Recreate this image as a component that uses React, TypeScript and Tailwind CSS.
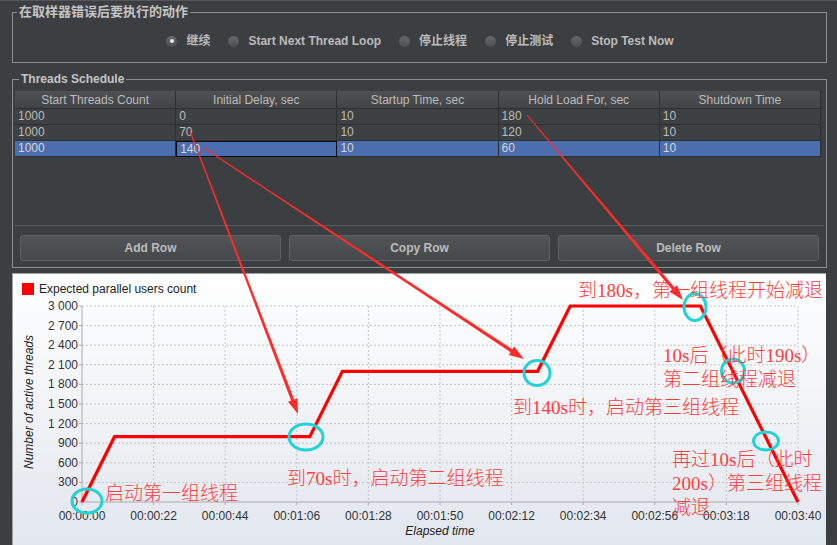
import React from 'react'

const COLS = ['Start Threads Count', 'Initial Delay, sec', 'Startup Time, sec', 'Hold Load For, sec', 'Shutdown Time']
const ROWS = [
  ['1000', '0', '10', '180', '10'],
  ['1000', '70', '10', '120', '10'],
  ['1000', '140', '10', '60', '10'],
]
const RADIOS = [
  { label: '继续', on: true },
  { label: 'Start Next Thread Loop', on: false },
  { label: '停止线程', on: false },
  { label: '停止测试', on: false },
  { label: 'Stop Test Now', on: false },
]

const xs = (t: number) => 81 + (t * 716) / 220
const ys = (v: number) => 501 - (v * 196) / 3000

const LOAD = [
  [0, 0], [10, 1000], [70, 1000], [80, 2000], [140, 2000], [150, 3000], [190, 3000], [220, 0],
]
const YTICKS = ['0', '300', '600', '900', '1 200', '1 500', '1 800', '2 100', '2 400', '2 700', '3 000']

function timeLabel(s: number) {
  const m = Math.floor(s / 60)
  const r = s % 60
  return `00:${String(m).padStart(2, '0')}:${String(r).padStart(2, '0')}`
}

function arrowPoints(x0: number, y0: number, x1: number, y1: number) {
  const dx = x1 - x0
  const dy = y1 - y0
  const len = Math.hypot(dx, dy)
  const ux = dx / len
  const uy = dy / len
  const nx = -uy
  const ny = ux
  const hl = 15
  const hw = 5
  const w0 = 0.5
  const w1 = 1.7
  const bx = x1 - ux * hl
  const by = y1 - uy * hl
  const pts = [
    [x0 + nx * w0, y0 + ny * w0],
    [bx + nx * w1, by + ny * w1],
    [bx + nx * hw, by + ny * hw],
    [x1, y1],
    [bx - nx * hw, by - ny * hw],
    [bx - nx * w1, by - ny * w1],
    [x0 - nx * w0, y0 - ny * w0],
  ]
  return pts.map((p) => p.map((n) => n.toFixed(1)).join(',')).join(' ')
}

function Radio({ label, on }: { label: string; on: boolean }) {
  return (
    <div className="flex items-center gap-[8px]">
      <span className="flex h-[13px] w-[13px] items-center justify-center rounded-full border border-[#3b3d3f] bg-linear-to-b from-[#66696c] to-[#4d5052]">
        {on && <span className="h-[4px] w-[4px] rounded-full bg-[#e8e8e8]" />}
      </span>
      <span className="text-[12px] font-bold leading-4 text-[#bbbbbb]">{label}</span>
    </div>
  )
}

function Chart() {
  return (
    <svg width={814} height={272} viewBox="12 273 814 272" className="block" fontFamily="'Liberation Sans', Arial, sans-serif">
      <rect x={21} y={282} width={12} height={12} fill="#ff0000" />
      <text x={38} y={292} fontSize={12} fill="#222">Expected parallel users count</text>

      {YTICKS.map((_, i) =>
        i === 0 ? null : (
          <line key={'h' + i} x1={81} x2={797} y1={ys(i * 300)} y2={ys(i * 300)} stroke="#c4c6c9" strokeDasharray="2 2" />
        ),
      )}
      {Array.from({ length: 11 }).map((_, i) =>
        i === 0 ? null : (
          <line key={'v' + i} x1={81 + i * 71.6} x2={81 + i * 71.6} y1={305} y2={501} stroke="#c4c6c9" strokeDasharray="2 2" />
        ),
      )}
      <line x1={81} x2={81} y1={305} y2={502} stroke="#a8abaf" />
      <line x1={80} x2={797} y1={501} y2={501} stroke="#a8abaf" />
      {YTICKS.map((t, i) => (
        <g key={'y' + i}>
          <line x1={78} x2={81} y1={ys(i * 300)} y2={ys(i * 300)} stroke="#a8abaf" />
          <text x={77} y={ys(i * 300) + 4} fontSize={12} fill="#333" textAnchor="end">{t}</text>
        </g>
      ))}
      {Array.from({ length: 11 }).map((_, i) => (
        <g key={'x' + i}>
          <line x1={81 + i * 71.6} x2={81 + i * 71.6} y1={501} y2={504} stroke="#a8abaf" />
          <text x={81 + i * 71.6} y={519} fontSize={12} fill="#333" textAnchor="middle">{timeLabel(i * 22)}</text>
        </g>
      ))}
      <text x={439} y={534} fontSize={12} fontStyle="italic" fill="#222" textAnchor="middle">Elapsed time</text>
      <text x={0} y={0} fontSize={12} fontStyle="italic" fill="#222" textAnchor="middle" transform="translate(32 401) rotate(-90)">
        Number of active threads
      </text>

      <polyline
        points={LOAD.map(([t, v]) => `${xs(t).toFixed(1)},${ys(v).toFixed(1)}`).join(' ')}
        fill="none"
        stroke="#ff0000"
        strokeWidth={3.2}
        strokeLinejoin="miter"
      />
    </svg>
  )
}

const NOTES = [
  { x: 105, y: 481, lines: ['启动第一组线程'] },
  { x: 287, y: 466, lines: ['到70s时，启动第二组线程'] },
  { x: 513, y: 395, lines: ['到140s时，启动第三组线程'] },
  { x: 578, y: 278, lines: ['到180s，第一组线程开始减退'] },
  { x: 663, y: 343, lines: ['10s后（此时190s）', '第二组线程减退'] },
  { x: 672, y: 447, lines: ['再过10s后（此时', '200s）第三组线程', '减退'] },
]

const RINGS = [
  [87, 500, 15, 12],
  [306, 436, 17, 13],
  [537, 372, 13, 12.5],
  [695, 306, 11, 13.5],
  [733, 370, 11.5, 12],
  [766, 440, 12.5, 9],
]

export default function App() {
  return (
    <div className="relative h-[545px] w-[837px] overflow-hidden border-t border-[#55585b] bg-[#3c3f41] font-['Liberation_Sans','Noto_Sans_CJK_SC',sans-serif]">
      <div className="px-[12px] pt-[3px]">
        <fieldset className="flex h-[59px] w-[815px] items-center justify-center gap-[17px] border border-[#8d9093]">
          <legend className="ml-[4px] px-[2px] text-[13px] font-bold leading-4 text-[#c4c4c4]">在取样器错误后要执行的动作</legend>
          {RADIOS.map((r) => (
            <Radio key={r.label} label={r.label} on={r.on} />
          ))}
        </fieldset>

        <fieldset className="mt-[8px] h-[197px] w-[815px] border border-[#8d9093] px-[2px] pt-[4px]">
          <legend className="ml-[4px] px-[2px] text-[12px] font-bold leading-4 text-[#c4c4c4]">Threads Schedule</legend>
          <div className="h-[135px] border-b border-[#5b5e61]">
            <div className="grid w-[806px] grid-cols-5">
              {COLS.map((c) => (
                <div
                  key={c}
                  className="h-[18px] border-r border-b border-[#2c2e30] bg-linear-to-b from-[#4f5254] to-[#414446] text-center text-[12px] leading-[18px] text-[#bbbbbb]"
                >
                  {c}
                </div>
              ))}
              {ROWS.map((row, ri) =>
                row.map((cell, ci) => {
                  const sel = ri === 2
                  const focus = sel && ci === 1
                  return (
                    <div
                      key={ri + '-' + ci}
                      className={
                        'h-[16px] pl-[3px] text-[12px] leading-[15px] ' +
                        (sel ? 'bg-[#4b6eaf] text-[#d6d6d6] ' : 'bg-[#3e4143] text-[#bbbbbb] ') +
                        (focus ? 'border border-[#0c0c0c]' : 'border-r border-b border-[#2c2e30]')
                      }
                    >
                      {cell}
                    </div>
                  )
                }),
              )}
            </div>
          </div>
          <div className="mt-[9px] grid grid-cols-3 gap-[8px] px-[5px]">
            {['Add Row', 'Copy Row', 'Delete Row'].map((b) => (
              <button
                key={b}
                className="h-[26px] rounded-[3px] border border-[#5e6265] bg-linear-to-b from-[#515557] to-[#46494b] text-[12px] font-bold text-[#bbbbbb]"
              >
                {b}
              </button>
            ))}
          </div>
        </fieldset>

        <div className="mt-[5px] h-[272px] w-[814px] border-t border-l border-[#9da0a3] bg-linear-to-b from-white to-[#e2e7ee]">
          <Chart />
        </div>
      </div>

      <svg className="pointer-events-none absolute inset-0" width={837} height={545} viewBox="0 0 837 545">
        {RINGS.map(([cx, cy, rx, ry], i) => (
          <ellipse key={i} cx={cx} cy={cy} rx={rx} ry={ry} fill="none" stroke="#22d3d6" strokeWidth={3} />
        ))}
        <polygon points={arrowPoints(190, 130, 298, 413)} fill="#ff2b2b" />
        <polygon points={arrowPoints(204, 147, 524, 358)} fill="#ff2b2b" />
        <polygon points={arrowPoints(527, 114, 683, 299)} fill="#ff2b2b" />
      </svg>

      {NOTES.map((n, i) => (
        <div
          key={i}
          className="pointer-events-none absolute whitespace-nowrap font-['Liberation_Serif','Noto_Sans_CJK_SC',serif] text-[19px] font-light leading-[24px] text-[#ff3d3d]"
          style={{ left: n.x, top: n.y }}
        >
          {n.lines.map((l) => (
            <div key={l}>{l}</div>
          ))}
        </div>
      ))}
    </div>
  )
}
